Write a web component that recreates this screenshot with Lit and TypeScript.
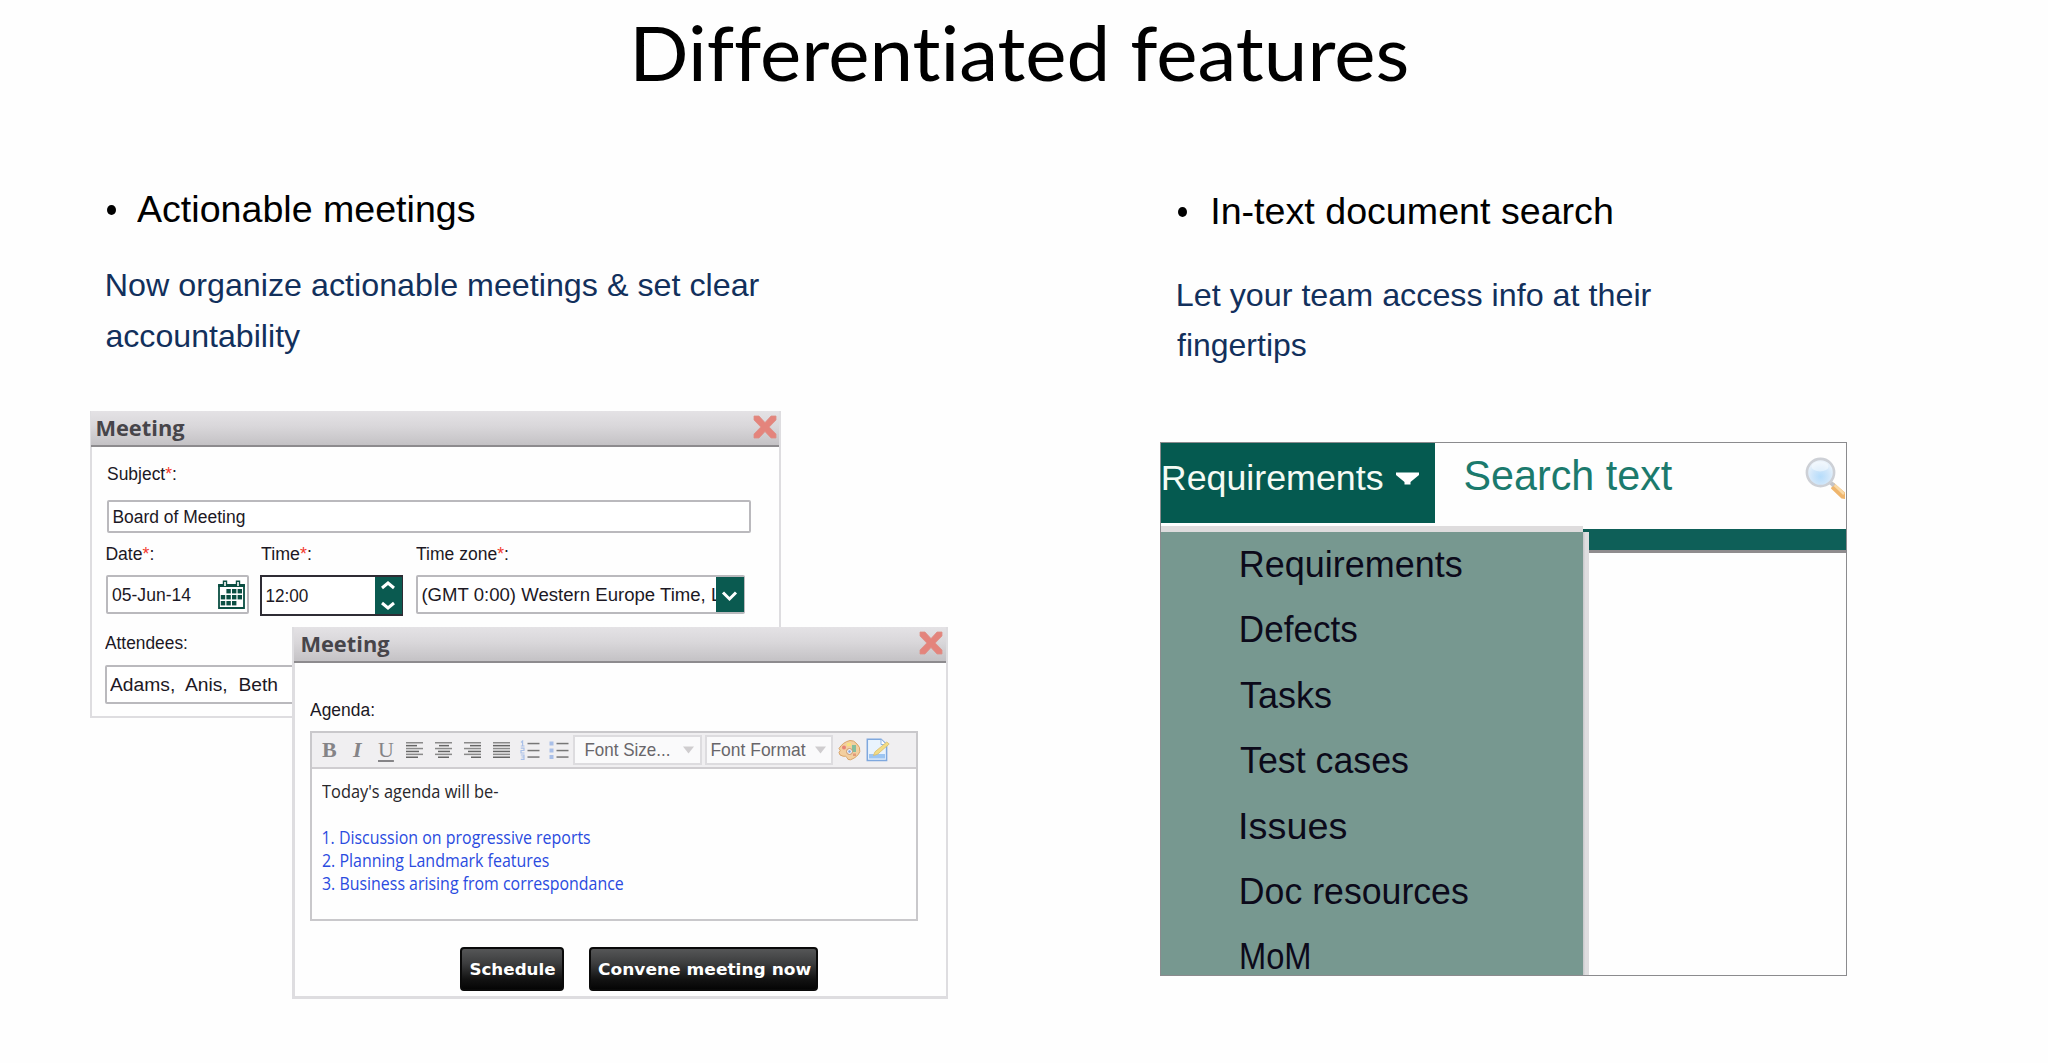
import { LitElement, html, css, svg } from "lit";
import { customElement, property } from "lit/decorators.js";

/** One line of text whose drawn glyphs span `w` pixels. */
@customElement("fit-text")
class FitText extends LitElement {
  @property({ type: Number }) w = 100;
  static styles = css`
    :host { display: inline-block; white-space: pre; flex: none; }
    .run { display: inline-block; transform-origin: 0 50%; letter-spacing: 0.01px; font-variant-ligatures: none; }
  `;
  updated() {
    this.style.width = this.w + "px";
    const cs = getComputedStyle(this);
    const ctx = document.createElement("canvas").getContext("2d")! as any;
    ctx.font = `${cs.fontStyle} ${cs.fontWeight} ${cs.fontSize} ${cs.fontFamily}`;
    ctx.letterSpacing = "0.01px";
    const m = ctx.measureText((this.textContent || "").trim());
    const k = this.w / (m.actualBoundingBoxLeft + m.actualBoundingBoxRight);
    const run = this.renderRoot.querySelector(".run") as HTMLElement;
    run.style.transform = `translateX(${m.actualBoundingBoxLeft * k * 0.6}px) scaleX(${k})`;
  }
  render() { return html`<span class="run"><slot></slot></span>`; }
}

const closeIcon = html`<svg class="close" viewBox="0 0 24 24" width="24" height="24">
  <path d="M1 1H6L12 7.6L18 1H23V5L16.2 12L23 19V23H18L12 16.6L6 23H1V19L7.8 12L1 5Z" fill="#e4847c" stroke="#dd8f86" stroke-width=".8"/></svg>`;

const calendarIcon = html`<svg viewBox="0 0 27 29" width="27" height="29">
  <path d="M1 5H26V28H1Z" fill="#fff" stroke="#0b4f43" stroke-width="1.8"/>
  <path d="M0 4.500H27V7H0Z" fill="#0b4f43"/>
  <path d="M5.500 6V1.200H8.500V6M18.500 6V1.200H21.500V6" fill="#fff" stroke="#0b4f43" stroke-width="1.400"/>
  ${[[1, 2, 3], [0, 1, 2, 3], [0, 1, 2]].map((cols, r) => cols.map((c) => svg`<rect x=${2.8 + c * 5.6} y=${9 + r * 6} width="4.400" height="4.400" fill="#0b4f43"/>`))}
</svg>`;

const bars = (rows: number[][]) => html`<svg viewBox="0 0 18 18" width="18" height="18">
  ${rows.map(([x, w], i) => svg`<rect x=${x} y=${1 + i * 2.9} width=${w} height="1.500" fill=${i % 2 ? "#666" : "#8a8a8a"}/>`)}</svg>`;

const digitPaths = [
  "M1 2.500L2.600 1V6M.8 6H4.500",
  "M.8 8.200H4V10.500H1V13H4.500",
  "M.8 15H4V19.300H.8M1.500 17H4",
];
const listIcon = (numbered: boolean) => html`<svg viewBox="0 0 20 20" width="20" height="20">
  ${[3.5, 10.5, 17].map((y, i) => svg`
    <rect x="7.500" y=${y - 0.7} width="12" height="1.500" fill="#777"/>
    ${numbered
      ? svg`<path d=${digitPaths[i]} fill="none" stroke="#a9c0e8" stroke-width="1.200"/>`
      : svg`<rect x=".5" y=${y - 2} width="4" height="4" fill="#a9bfe8"/>`}`)}</svg>`;

const paletteIcon = html`<svg viewBox="0 0 23 23" width="23" height="23">
  <path d="M1 9.500Q5 3 12 1.500Q16 1 19 5Q22.500 8 21.800 12.500Q20 18 12.500 20.800Q9.500 21.300 9 18.500Q8.500 16.800 5 17.200Q1 16.500 1 13.500Q3.500 11.500 1 9.500Z" fill="#f3cf9f" stroke="#d9a467" stroke-width="1"/>
  <circle cx="6" cy="8.500" r="2" fill="#e78274"/><rect x="9" y="4" width="4" height="3" fill="#f6e27d"/>
  <rect x="14" y="6" width="4" height="7" fill="#86bd9c"/><circle cx="11.500" cy="12.500" r="3" fill="#e9eef7" stroke="#cc9568"/>
  <circle cx="11.500" cy="12.500" r="1.200" fill="#7ba2dc"/><rect x="15" y="14.500" width="3" height="2.500" fill="#e29a7a"/></svg>`;

const editIcon = html`<svg viewBox="0 0 25 24" width="25" height="24">
  <path d="M1.300 1.200H15L20.600 6.500V22.500H1.300Z" fill="#e9f3fd" stroke="#7fa8de" stroke-width="1.500"/>
  <path d="M3 16H19V20.500H3Z" fill="#9cc5f2"/><path d="M15 1.500V6.500H20" fill="#fff" stroke="#8fb4e4"/>
  <path d="M7.500 17.500L9 13.800L20.800 4L23.200 6L11.600 16.200Z" fill="#f3dc86" stroke="#d8bd6c" stroke-width=".8"/></svg>`;

const magnifier = html`<svg viewBox="0 0 40 43" width="40" height="43">
  <defs><radialGradient id="lens" cx=".5" cy=".65" r=".6"><stop offset="0" stop-color="#b5dcfb"/><stop offset=".5" stop-color="#cfe6fa"/><stop offset="1" stop-color="#edf4fb"/></radialGradient></defs>
  <path d="M28.500 25.500L40 35.500V42L36.500 41.500L26 31.500Z" fill="#efb56c"/>
  <path d="M29.500 28L39 37" stroke="#f9d9a6" stroke-width="2.500"/>
  <path d="M24 24.500L29 28.500" stroke="#c4c4c8" stroke-width="4"/>
  <circle cx="15.500" cy="15.500" r="13.600" fill="url(#lens)" stroke="#cdd0d6" stroke-width="2.600"/>
  <ellipse cx="15" cy="9.500" rx="8.500" ry="5" fill="#fff" opacity=".45"/></svg>`;

const down = html`<svg viewBox="0 0 11 8" width="11" height="8"><path d="M0 .5H11L5.500 7.500Z" fill="#cfcdcf"/></svg>`;

@customElement("app-root")
class AppRoot extends LitElement {
  static styles = css`
    :host { display: block; width: 2048px; height: 1063px; background: #fefefe; overflow: hidden; font-family: "Liberation Sans", Arial, sans-serif; color: #1c1824; }
    * { box-sizing: border-box; }
    svg { display: block; flex: none; }
    fit-text { display: block; }
    .title { margin: 0; padding-left: 633px; height: 102px; font: 400 75.500px/103px Lato, "Open Sans", sans-serif; color: #000; }
    .columns { display: grid; grid-template-columns: 1160px 1fr; }
    .point { display: flex; align-items: center; height: 50px; margin-top: 83px; padding-left: 16px; font-size: 37px; line-height: 50px; color: #000; }
    .point.r { margin-top: 85px; padding-left: 18px; }
    .dot { width: 9px; height: 10px; border-radius: 50%; background: #000; margin-right: 21px; }
    .point.r .dot { margin-right: 25px; }
    .blurb { margin: 25px 0 0 15px; font-size: 31.500px; line-height: 50.500px; color: #12305c; }
    .blurb.r { margin: 33px 0 0 17px; line-height: 50px; }
    .left { padding-left: 91px; }

    .stage { position: relative; margin-top: 50px; height: 590px; }
    .win { border: 2px solid #dedde0; border-top: 0; background: #fefefe; }
    .first { width: 691px; height: 307px; margin-left: -1px; }
    .second { position: absolute; left: 201px; top: 216px; width: 656px; height: 372px; border-left-width: 3px; border-bottom-width: 3px; }
    .bar { display: flex; justify-content: space-between; align-items: flex-start; height: 36px; padding: 3px 2px 0 5px; border-bottom: 2px solid #8d8b8e; background: linear-gradient(#e4e2e5, #d9d7da 45%, #c4c2c5); font: 700 21.500px/27px "Open Sans", sans-serif; color: #47454a; margin: 0 0 0 -1px; }
    .second .bar { padding-left: 7px; padding-right: 3px; }
    .close { margin-top: 1px; }
    .form { padding: 0 0 0 15px; font-size: 17.500px; }
    .label { line-height: 20px; height: 20px; }
    .req { color: #f2382c; }
    .field { display: flex; align-items: center; border: 2px solid #bab9bd; border-radius: 2px; background: #fff; font-size: 18px; line-height: 28px; padding-left: 4px; overflow: hidden; }
    .subject-l { margin: 17px 0 0 0; }
    .subject { width: 644px; height: 33px; margin: 16px 0 0; }
    .row { display: grid; grid-template-columns: 155px 155px 1fr; }
    .labels { margin: 11px 0 0 -1px; }
    .inputs { margin: 10px 0 0 -1px; height: 41px; align-items: start; }
    .date { width: 143px; height: 39px; justify-content: space-between; padding: 0 2px 0 4px; }
    .time { width: 143px; height: 41px; margin-left: -1px; border: 2px solid #2e2c34; border-right-width: 1px; border-radius: 0; justify-content: space-between; padding-left: 4px; }
    .spin { width: 27px; height: 37px; background: #0a5a50; }
    .zone { width: 329px; height: 39px; padding-left: 4px; justify-content: space-between; border-right-width: 1px; }
    .zonetext { width: 295px; overflow: hidden; display: flex; gap: 6px; }
    .drop { width: 28px; height: 36px; background: #0a5a50; }
    .att-l { margin: 17px 0 0 -2px; }
    .att { width: 320px; height: 39px; margin: 12px 0 0 -2px; padding-left: 3px; }

    .agenda-l { margin: 36px 0 0 15px; font-size: 18px; line-height: 22px; height: 22px; }
    .editor { margin: 10px 0 0 15px; width: 608px; height: 190px; border: 2px solid #c9c8cb; background: #fefefe; }
    .tools { display: flex; align-items: center; height: 36px; padding-left: 10px; border-bottom: 2px solid #cfcdd0; background: #f0eff1; color: #858487; font: 700 22px/28px "Liberation Serif", serif; }
    .tools > * { flex: none; }
    .b { width: 31px; } .i { width: 25px; font-style: italic; } .u { width: 28px; font-weight: 400; text-decoration: underline; text-underline-offset: 3px; text-decoration-thickness: 2px; }
    .al { width: 29px; }
    .al.j { width: 27px; }
    .al.l { width: 24px; }
    .sel { display: flex; align-items: center; justify-content: space-between; height: 30px; border: 2px solid #dddcdf; background: #fafafb; font: 400 18.500px/26px "Liberation Sans", sans-serif; color: #68666a; }
    .s1 { width: 129px; padding: 0 6px 0 10px; margin-right: 3px; }
    .s2 { width: 128px; padding: 0 5px 0 4px; margin-right: 5px; }
    .gap { width: 5px; }
    .body { padding: 11px 0 0 10px; font: 400 17.500px/23px "Open Sans", "Noto Sans", sans-serif; color: #29272b; }
    .items { margin-top: 23px; color: #2a4be0; }
    .actions { display: flex; gap: 25px; margin: 26px 0 0 165px; }
    .btn { height: 44px; border: 2px solid #0a0a0a; border-radius: 4px; background: linear-gradient(#555657, #3d3e3f 35%, #131313 75%, #050505); color: #fff; font: 700 16.500px/39px "DejaVu Sans", sans-serif; padding: 1px 0 0 7px; }
    .sch { width: 104px; padding-left: 8px; } .con { width: 229px; }

    .shot { margin-top: 72px; width: 687px; height: 534px; border: 1.500px solid #8b8b8e; background: #fefefe; overflow: hidden; display: grid; grid-template-columns: 422px 1fr; grid-template-rows: 83px 449px; }
    .head { grid-column: 1 / 3; display: flex; align-items: flex-start; }
    .tab { width: 274px; height: 80px; background: #055a50; color: #f4fbf4; display: flex; font-size: 35.500px; line-height: 70px; padding-left: 1px; }
    .caret { margin: 29px 0 0 14px; }
    .search { margin-left: 29px; width: 341px; font-size: 43px; line-height: 64px; color: #1b7a6d; }
    .mag { margin-top: 14px; }
    .menu { border-top: 6px solid #dedcdd; background: #779890; padding: 0 0 0 79px; font-size: 36px; line-height: 65.400px; color: #0c0a1a; height: 449px; }
    .menu fit-text { height: 65.400px; }
    .menu fit-text:last-child { height: 56px; }
    .rest { display: flex; align-items: flex-start; height: 449px; }
    .edge { width: 6px; height: 446px; margin-top: 3px; background: linear-gradient(90deg, #c6c7c9, #dedddf 40%); border-top: 3px solid #0d5d55; }
    .strip { flex: 1; height: 24px; margin-top: 3px; background: #0e5f58; border-bottom: 3px solid #8f8c8e; }
  `;

  private menu: [string, number][] = [
    ["Requirements", 221], ["Defects", 116], ["Tasks", 91], ["Test cases", 168],
    ["Issues", 105], ["Doc resources", 227], ["MoM", 69],
  ];

  render() {
    return html`
      <h1 class="title"><fit-text w="771">Differentiated features</fit-text></h1>
      <div class="columns">
        <section class="left">
          <div class="point"><span class="dot"></span><fit-text w="338">Actionable meetings</fit-text></div>
          <div class="blurb">
            <fit-text w="652">Now organize actionable meetings &amp; set clear</fit-text>
            <fit-text w="194">accountability</fit-text>
          </div>
          <div class="stage">
            <div class="win first">
              <div class="bar"><fit-text w="88">Meeting</fit-text>${closeIcon}</div>
              <div class="form">
                <div class="label subject-l"><fit-text w="69">Subject<span class="req">*</span>:</fit-text></div>
                <div class="field subject"><fit-text w="131">Board of Meeting</fit-text></div>
                <div class="row labels">
                  <fit-text w="47">Date<span class="req">*</span>:</fit-text>
                  <fit-text w="50">Time<span class="req">*</span>:</fit-text>
                  <fit-text w="92">Time zone<span class="req">*</span>:</fit-text>
                </div>
                <div class="row inputs">
                  <div class="field date"><fit-text w="79">05-Jun-14</fit-text>${calendarIcon}</div>
                  <div class="field time"><fit-text w="42">12:00</fit-text>
                    <svg class="spin" viewBox="0 0 27 37"><path d="M7 11L13 6L19 11M7 26L13 31L19 26" fill="none" stroke="#fff" stroke-width="3"/></svg>
                  </div>
                  <div class="field zone">
                    <div class="zonetext"><fit-text w="283">(GMT 0:00) Western Europe Time,</fit-text><span>L</span></div>
                    <svg class="drop" viewBox="0 0 28 36"><path d="M7 15.500L13.500 22L20 15.500" fill="none" stroke="#fff" stroke-width="3"/></svg>
                  </div>
                </div>
                <div class="label att-l"><fit-text w="82">Attendees:</fit-text></div>
                <div class="field att"><fit-text w="168">Adams,  Anis,  Beth</fit-text></div>
              </div>
            </div>
            <div class="win second">
              <div class="bar"><fit-text w="88">Meeting</fit-text>${closeIcon}</div>
              <div class="agenda-l"><fit-text w="64">Agenda:</fit-text></div>
              <div class="editor">
                <div class="tools">
                  <span class="b">B</span><span class="i">I</span><span class="u">U</span>
                  <span class="al">${bars([[0, 17], [0, 11], [0, 17], [0, 13], [0, 17], [0, 12]])}</span>
                  <span class="al">${bars([[0, 17], [4, 10], [0, 17], [3, 12], [0, 17], [3, 11]])}</span>
                  <span class="al">${bars([[0, 17], [6, 11], [0, 17], [4, 13], [0, 17], [7, 10]])}</span>
                  <span class="al j">${bars([[0, 17], [0, 17], [0, 17], [0, 17], [0, 17], [0, 17]])}</span>
                  <span class="al">${listIcon(true)}</span><span class="al l">${listIcon(false)}</span>
                  <span class="sel s1"><fit-text w="84">Font Size...</fit-text>${down}</span>
                  <span class="sel s2"><fit-text w="94">Font Format</fit-text>${down}</span>
                  ${paletteIcon}<span class="gap"></span>${editIcon}
                </div>
                <div class="body">
                  <fit-text w="176">Today's agenda will be-</fit-text>
                  <div class="items">
                    <fit-text w="268">1. Discussion on progressive reports</fit-text>
                    <fit-text w="227">2. Planning Landmark features</fit-text>
                    <fit-text w="301">3. Business arising from correspondance</fit-text>
                  </div>
                </div>
              </div>
              <div class="actions">
                <div class="btn sch"><fit-text w="85">Schedule</fit-text></div>
                <div class="btn con"><fit-text w="213">Convene meeting now</fit-text></div>
              </div>
            </div>
          </div>
        </section>
        <section>
          <div class="point r"><span class="dot"></span><fit-text w="399">In-text document search</fit-text></div>
          <div class="blurb r">
            <fit-text w="473">Let your team access info at their</fit-text>
            <fit-text w="129">fingertips</fit-text>
          </div>
          <div class="shot">
            <div class="head">
              <div class="tab"><fit-text w="220">Requirements</fit-text>
                <svg class="caret" viewBox="0 0 23 13" width="23" height="13"><path d="M0 .5H23V3L14.500 10V12.500H8.500V10L0 3Z" fill="#fff"/></svg>
              </div>
              <div class="search"><fit-text w="208">Search text</fit-text></div>
              <div class="mag">${magnifier}</div>
            </div>
            <div class="menu">${this.menu.map(([t, w]) => html`<fit-text .w=${w}>${t}</fit-text>`)}</div>
            <div class="rest"><div class="edge"></div><div class="strip"></div></div>
          </div>
        </section>
      </div>`;
  }
}
